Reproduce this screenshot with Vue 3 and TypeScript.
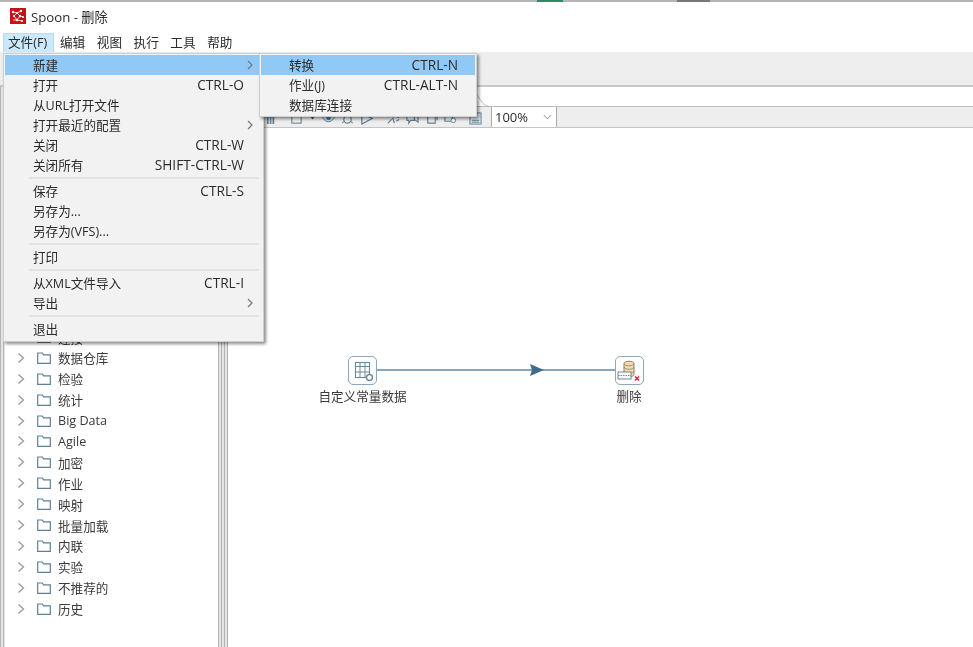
<script setup lang="ts">
interface MenuRow {
  label?: string
  shortcut?: string
  arrow?: boolean
  active?: boolean
  sep?: boolean
}

const menus = ["编辑", "视图", "执行", "工具", "帮助"]

const fileMenu: MenuRow[] = [
  { label: "新建", arrow: true, active: true },
  { label: "打开", shortcut: "CTRL-O" },
  { label: "从URL打开文件" },
  { label: "打开最近的配置", arrow: true },
  { label: "关闭", shortcut: "CTRL-W" },
  { label: "关闭所有", shortcut: "SHIFT-CTRL-W" },
  { sep: true },
  { label: "保存", shortcut: "CTRL-S" },
  { label: "另存为..." },
  { label: "另存为(VFS)..." },
  { sep: true },
  { label: "打印" },
  { sep: true },
  { label: "从XML文件导入", shortcut: "CTRL-I" },
  { label: "导出", arrow: true },
  { sep: true },
  { label: "退出" },
]

const newMenu: MenuRow[] = [
  { label: "转换", shortcut: "CTRL-N", active: true },
  { label: "作业(J)", shortcut: "CTRL-ALT-N" },
  { label: "数据库连接" },
]

// rows above 连接 sit behind the open menu
const tree = [
  "连接", "数据仓库", "检验", "统计", "Big Data", "Agile", "加密", "作业",
  "映射", "批量加载", "内联", "实验", "不推荐的", "历史",
]
</script>

<template>
  <div class="app">
    <div class="edge"></div>
    <header class="title">
      <svg class="logo" viewBox="0 0 16 16">
        <rect width="16" height="16" fill="#c90f17" />
        <g stroke="#fff" stroke-width="0.8" fill="none">
          <path d="M3 4l4 1 4-2M4 8l3-3 3 3-3 4-3-4M10 8l3 1M3 12l4 0 5 1" />
        </g>
        <g fill="#fff">
          <circle cx="3" cy="4" r="1.2" />
          <circle cx="11" cy="3" r="1.2" />
          <circle cx="7" cy="5" r="1.1" />
          <circle cx="4" cy="8" r="1.1" />
          <circle cx="10" cy="8" r="1.2" />
          <circle cx="13" cy="9" r="1" />
          <circle cx="7" cy="12" r="1.2" />
          <circle cx="12" cy="13" r="1" />
        </g>
      </svg>
      <span>Spoon - 删除</span>
    </header>

    <nav class="menubar">
      <span class="top-item open">文件(F)</span>
      <span v-for="m in menus" :key="m" class="top-item">{{ m }}</span>
    </nav>

    <div class="toolbar"></div>

    <div class="body">
      <div class="stripes left-edge"></div>
      <aside class="tree">
        <div v-for="t in tree" :key="t" class="tree-row">
          <svg class="chevron" viewBox="0 0 8 12">
            <path d="M1.5 1.5L6.5 6l-5 4.500" fill="none" stroke="#999" stroke-width="1.300" />
          </svg>
          <svg class="folder" viewBox="0 0 14 12">
            <path d="M.7 1h4.600l1.300 1.800h6.700v8.500H.7z" fill="#fff" stroke="#5f7f95" stroke-width="1.200" />
          </svg>
          <span>{{ t }}</span>
        </div>
      </aside>
      <div class="stripes sash"></div>

      <main class="work">
        <div class="tabstrip">
          <div class="tab"></div>
          <svg class="tab-curve" viewBox="0 0 14 20">
            <path d="M0 8c4 0 4 11 14 11.500" fill="none" stroke="#bbb" />
          </svg>
        </div>
        <div class="toolrow">
          <div class="tools">
            <svg class="tool" viewBox="0 0 14 14"><path d="M3 1v12M6 1v12M9 1v12" stroke="#6f8797" stroke-width="2" /></svg>
            <svg class="tool stop" viewBox="0 0 14 14"><rect x="2" y="2" width="10" height="10" fill="none" stroke="#6f8797" stroke-width="1.200" /></svg>
            <svg class="tool small" viewBox="0 0 8 14"><path d="M1 4h6l-3 4z" fill="#47525a" /></svg>
            <svg class="tool" viewBox="0 0 14 14"><path d="M.5 6c4-4 9-4 13 0-4 6-9 6-13 0z" fill="#cfe0ea" stroke="#4f7f9f" /><circle cx="7" cy="6.500" r="2.500" fill="#4f7f9f" /></svg>
            <svg class="tool" viewBox="0 0 14 14"><circle cx="7" cy="8" r="4" fill="none" stroke="#5f7f95" stroke-width="1.300" /><path d="M1 4l3 2M13 4l-3 2M1 12l3-2M13 12l-3-2" stroke="#5f7f95" /></svg>
            <svg class="tool" viewBox="0 0 14 14"><path d="M2 1v12l11-6z" fill="none" stroke="#5f7f95" stroke-width="1.300" /></svg>
            <svg class="tool wide" viewBox="0 0 14 14"><path d="M1 12l4-4M6 6l2 6M9 4l4 2M10 10l3-2" stroke="#5f7f95" stroke-width="1.300" /></svg>
            <svg class="tool" viewBox="0 0 14 14"><path d="M1 3h8v6H5l-2 3V9H1zM9 8l4 3V5" fill="none" stroke="#5f7f95" stroke-width="1.200" /></svg>
            <svg class="tool" viewBox="0 0 14 14"><path d="M3 4h8v8H3zM6 1h7v8" fill="none" stroke="#5f7f95" stroke-width="1.200" /></svg>
            <svg class="tool" viewBox="0 0 14 14"><path d="M1 2h8v8H1z" fill="none" stroke="#5f7f95" stroke-width="1.200" /><circle cx="10" cy="9" r="2.500" fill="#fff" stroke="#5f7f95" /></svg>
            <svg class="tool last" viewBox="0 0 14 14"><rect x="1" y="1" width="12" height="12" fill="#dce7ee" stroke="#5f7f95" /><path d="M3 9h8M3 11h8" stroke="#5f7f95" /></svg>
          </div>
          <div class="combo">
            <span>100%</span>
            <svg class="combo-arrow" viewBox="0 0 10 6"><path d="M1 1l4 4 4-4" fill="none" stroke="#777" /></svg>
          </div>
        </div>

        <div class="canvas">
          <svg class="hop" width="300" height="20" viewBox="0 0 300 20">
            <path d="M0 10h239" stroke="#6388a1" stroke-width="1.400" />
            <path d="M153 4l14 6-14 6 2-6z" fill="#3f6c8c" />
          </svg>

          <div class="node first">
            <div class="node-box">
              <svg viewBox="0 0 28 28" width="28" height="28">
                <rect x="6.500" y="5.500" width="14" height="15" fill="#fff" stroke="#6b8799" stroke-width="1.100" />
                <path d="M6.500 9.500h14M6.500 15h14M11 5.500v15M16 5.500v15" stroke="#6b8799" />
                <circle cx="20.500" cy="20.500" r="3" fill="#fff" stroke="#6b8799" stroke-width="1.400" />
              </svg>
            </div>
            <span class="node-label">自定义常量数据</span>
          </div>

          <div class="node second">
            <div class="node-box">
              <svg viewBox="0 0 28 28" width="28" height="28">
                <path d="M9 6.500c0-3 10-3 10 0v11c0 3-10 3-10 0z" fill="#f4dcae" stroke="#8a8170" />
                <path d="M9 6.500c0 3 10 3 10 0M9 10c0 3 10 3 10 0M9 14c0 3 10 3 10 0" fill="none" stroke="#8a8170" stroke-width="0.800" />
                <rect x="3" y="15" width="13" height="7" fill="#fff" stroke="#6b8799" />
                <path d="M3 18.500h13" stroke="#6b8799" stroke-dasharray="1.500 1" />
                <path d="M20 19.500l4 4M24 19.500l-4 4" stroke="#e8253f" stroke-width="1.700" />
              </svg>
            </div>
            <span class="node-label">删除</span>
          </div>
        </div>
      </main>
    </div>

    <div class="menu file-menu">
      <template v-for="(row, i) in fileMenu" :key="i">
        <div v-if="row.sep" class="sep"></div>
        <div v-else class="row" :class="{ active: row.active }">
          <span>{{ row.label }}</span>
          <span v-if="row.shortcut" class="shortcut">{{ row.shortcut }}</span>
          <svg v-if="row.arrow" class="arrow" viewBox="0 0 6 10"><path d="M1 1l4 4-4 4" fill="none" stroke="#777" stroke-width="1.200" /></svg>
        </div>
      </template>
      <div class="menu sub-menu">
        <div v-for="row in newMenu" :key="row.label" class="row" :class="{ active: row.active }">
          <span>{{ row.label }}</span>
          <span v-if="row.shortcut" class="shortcut">{{ row.shortcut }}</span>
        </div>
      </div>
    </div>
  </div>
</template>

<style scoped>
.app {
  position: relative;
  display: flex;
  flex-direction: column;
  width: 973px;
  height: 647px;
  overflow: hidden;
  background: #fff;
  color: #2b2b2b;
  font-family: "Open Sans", "Noto Sans CJK SC", sans-serif;
  font-size: 12.6px;
  filter: blur(0.45px);
}

.edge {
  height: 2px;
  flex-shrink: 0;
  background: linear-gradient(to right, #b5b5b5 537px, #2d8a63 537px, #2d8a63 563px, #b5b5b5 563px, #b5b5b5 677px, #777 677px, #777 710px, #b5b5b5 710px);
}

.title {
  display: flex;
  align-items: center;
  height: 31px;
  flex-shrink: 0;
  box-sizing: border-box;
  padding: 0 0 3px 10px;
  gap: 5px;
  font-size: 13.2px;
}

.logo {
  width: 16px;
  height: 16px;
}

.menubar {
  display: flex;
  height: 19px;
  flex-shrink: 0;
  padding-left: 3px;
}

.top-item {
  display: flex;
  align-items: center;
  box-sizing: border-box;
  padding: 0 5px 3px;
  margin-right: 1.600px;
  white-space: nowrap;
}

.top-item.open {
  margin-right: 1px;
  width: 51px;
  background: #cce8fb;
  border: 1px solid #b5dcf5;
  border-bottom: none;
  padding-left: 4px;
  padding-right: 0;
}

.toolbar {
  height: 33px;
  flex-shrink: 0;
  background: #eee;
  border-bottom: 2px solid #c8c8c8;
}

.body {
  flex: 1;
  display: flex;
  min-height: 0;
}

.stripes {
  flex-shrink: 0;
  background: repeating-linear-gradient(to right, #b4b4b4 0, #b4b4b4 1px, #e6e6e6 1px, #e6e6e6 3px);
}

.left-edge {
  width: 5px;
}

.sash {
  width: 10px;
}

.tree {
  width: 213px;
  flex-shrink: 0;
  padding-top: 239.600px;
  box-sizing: border-box;
  background: #fff;
}

.tree-row {
  display: flex;
  align-items: center;
  height: 20.900px;
  color: #3a3a3a;
}

.chevron {
  width: 8px;
  height: 12px;
  margin-left: 12px;
}

.folder {
  width: 14px;
  height: 12px;
  margin-left: 12px;
  margin-right: 7px;
}

.work {
  flex: 1;
  display: flex;
  flex-direction: column;
  min-width: 0;
}

.tabstrip {
  position: relative;
  height: 20px;
  flex-shrink: 0;
  border-bottom: 1px solid #bbb;
  box-sizing: border-box;
}

.tab {
  position: absolute;
  left: 0;
  bottom: -1px;
  width: 248px;
  height: 20px;
  background: #fff;
}

.tab-curve {
  position: absolute;
  left: 248px;
  bottom: -1px;
  width: 14px;
  height: 20px;
}

.toolrow {
  display: flex;
  align-items: center;
  height: 20px;
  flex-shrink: 0;
  background: #eee;
  border-bottom: 1px solid #c4c4c4;
}

.tools {
  display: flex;
  align-items: center;
  width: 263px;
  flex-shrink: 0;
  padding: 3px 0 0 37px;
  box-sizing: border-box;
  gap: 6px;
}

.tool {
  width: 13px;
  height: 13px;
  flex-shrink: 0;
}

.tool.stop {
  margin-left: 6px;
}

.tool.small {
  width: 7px;
}

.tool.wide {
  margin-left: 8px;
}

.tool.last {
  margin-left: 6px;
}

.combo {
  display: flex;
  align-items: center;
  justify-content: space-between;
  width: 66px;
  height: 20px;
  box-sizing: border-box;
  padding: 0 4px 0 3px;
  background: #fff;
  border-left: 1px solid #aaa;
  border-right: 1px solid #aaa;
  font-size: 13px;
}

.combo-arrow {
  width: 9px;
  height: 6px;
}

.canvas {
  position: relative;
  flex: 1;
  background: #fff;
}

.hop {
  position: absolute;
  left: 149px;
  top: 232px;
}

.node {
  position: absolute;
  top: 228px;
  display: flex;
  flex-direction: column;
  align-items: center;
  width: 120px;
}

.node.first {
  left: 74.500px;
}

.node.second {
  left: 341px;
}

.node-box {
  width: 29px;
  height: 29px;
  box-sizing: border-box;
  border: 1.500px solid #8ea7ba;
  border-radius: 5px;
  background: #fff;
  display: flex;
  align-items: center;
  justify-content: center;
}

.node-box svg {
  flex-shrink: 0;
}

.node-label {
  margin-top: 3px;
  line-height: 18px;
  color: #3a3a3a;
}

.menu {
  position: absolute;
  box-sizing: border-box;
  background: #f2f2f2;
  border: 1px solid #cfcfcf;
  box-shadow: 2px 2px 3px rgba(0, 0, 0, 0.45);
  padding: 1px;
}

.file-menu {
  left: 3px;
  top: 53px;
  width: 261px;
  height: 289px;
}

.sub-menu {
  left: 255px;
  top: -1px;
  width: 218px;
  height: 64px;
}

.row {
  position: relative;
  display: flex;
  justify-content: space-between;
  align-items: center;
  height: 20px;
  box-sizing: border-box;
  padding: 0 17px 2px 28px;
  white-space: nowrap;
}

.row.active {
  background: #90c8f6;
}

.file-menu > .row {
  margin-right: 2px;
  padding-right: 16px;
}

.shortcut {
  font-size: 13.700px;
}

.sep {
  height: 2px;
  margin: 2px 3px 2px 24px;
  background: #e2e2e2;
}

.arrow {
  position: absolute;
  right: 7px;
  top: 5px;
  width: 6px;
  height: 10px;
}
</style>

<style>
html,
body {
  margin: 0;
  background: #fff;
}
</style>
